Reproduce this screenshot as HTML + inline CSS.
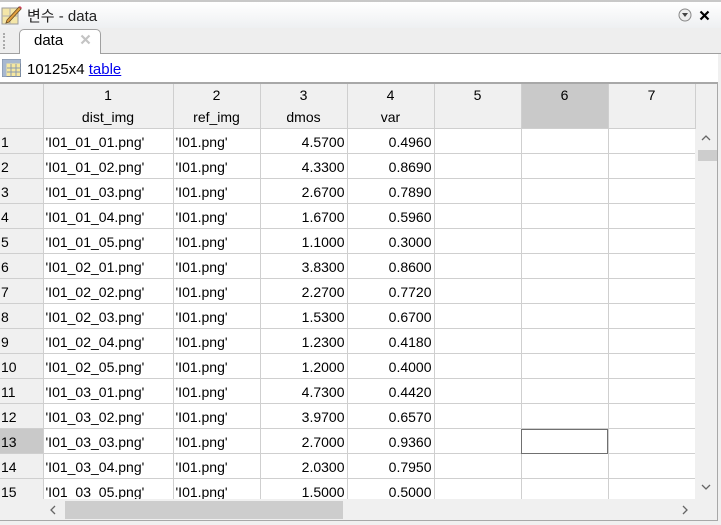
<!DOCTYPE html>
<html><head><meta charset="utf-8"><style>
*{margin:0;padding:0;box-sizing:border-box}
body{width:721px;height:525px;overflow:hidden;background:#f0f0f0;font-family:"Liberation Sans","Noto Sans CJK KR",sans-serif;font-size:14px;color:#000;position:relative}
.abs{position:absolute}
#title{left:0;top:0;width:721px;height:28px;background:linear-gradient(#fff,#eef0f2);border-top:2px solid #c8c8c8}
#tabs{left:0;top:28px;width:721px;height:26px;background:#eeeeee;border-bottom:1px solid #a0a0a0}
#tab{left:19px;top:29px;width:82px;height:25px;background:#fff;border:1px solid #a0a0a0;border-bottom:none;border-radius:5px 5px 0 0}
#info{left:0;top:54px;width:718px;height:30px;background:#fff;border-bottom:2px solid #a8a8a8}
table{position:absolute;left:0;top:84px;border-collapse:collapse;table-layout:fixed;background:#fff}
td{border-right:1px solid #cfcfcf;border-bottom:1px solid #cfcfcf;height:25px;padding:0 2px;white-space:nowrap;overflow:hidden;line-height:24px}
td span{position:relative;top:1px}
tr.h td{height:44px;background:#f0f0f0;text-align:center;line-height:22px;padding-top:0}
td.rh{background:#f0f0f0;padding-left:1px}
td.n{text-align:right}
</style></head><body>
<div id="title" class="abs"></div>
<svg class="abs" style="left:1px;top:5px" width="22" height="20" viewBox="0 0 22 20"><rect x="1" y="3" width="16" height="16" fill="#f4e6a8" stroke="#9a9a9a"/><line x1="1" y1="11" x2="17" y2="11" stroke="#b0b0b0"/><line x1="9" y1="3" x2="9" y2="19" stroke="#b0b0b0"/><path d="M6 15 L18 2 L20 4 L8 17 L5 18 Z" fill="#e0a040" stroke="#6a4a20" stroke-width="0.8"/><path d="M18 2 L20 4 L21 3 L19 1Z" fill="#d04060"/></svg>
<div class="abs" style="left:27px;top:5px;font-size:15px;color:#222">변수 - data</div>
<svg class="abs" style="left:678px;top:8px" width="14" height="14"><circle cx="7" cy="7" r="6" fill="#eee" stroke="#888"/><path d="M4 5 L10 5 L7 9Z" fill="#444"/></svg>
<svg class="abs" style="left:699px;top:10px" width="11" height="11"><path d="M1.5 1.5L9.5 9.5M9.5 1.5L1.5 9.5" stroke="#000" stroke-width="2.2"/></svg>
<div id="tabs" class="abs"></div>
<div class="abs" style="left:3px;top:33px;width:2px;height:16px;border-left:2px dotted #aaa"></div>
<div id="tab" class="abs"></div>
<div class="abs" style="left:34px;top:32px;font-size:15px">data</div>
<svg class="abs" style="left:80px;top:34px" width="11" height="11"><path d="M1.5 1.5L9.5 9.5M9.5 1.5L1.5 9.5" stroke="#c4c4c4" stroke-width="2.2"/></svg>
<div id="info" class="abs"></div>
<svg class="abs" style="left:2px;top:59px" width="19" height="18"><rect x="0.5" y="0.5" width="18" height="17" fill="#f6e8a0" stroke="#7a8aa0"/><rect x="0.5" y="0.5" width="18" height="4" fill="#a8b8d0"/><rect x="0.5" y="0.5" width="4" height="17" fill="#a8b8d0"/><path d="M5 9H19M5 13H19M9 5V18M14 5V18" stroke="#8a9ab0"/></svg>
<div class="abs" style="left:27px;top:61px;font-size:15px">10125x4 <span style="color:#0000ee;text-decoration:underline">table</span></div>
<table>
<colgroup><col style="width:43px"><col style="width:130px"><col style="width:87px"><col style="width:87px"><col style="width:87px"><col style="width:87px"><col style="width:87px"><col style="width:87px"></colgroup>
<tr class="h"><td></td><td>1<br>dist_img</td><td>2<br>ref_img</td><td>3<br>dmos</td><td>4<br>var</td><td style="vertical-align:top">5</td><td style="vertical-align:top;background:#c9c9c9">6</td><td style="vertical-align:top">7</td></tr>
<tr><td class="rh"><span>1</span></td><td><span>'I01_01_01.png'</span></td><td><span>'I01.png'</span></td><td class="n"><span>4.5700</span></td><td class="n"><span>0.4960</span></td><td></td><td></td><td></td></tr>
<tr><td class="rh"><span>2</span></td><td><span>'I01_01_02.png'</span></td><td><span>'I01.png'</span></td><td class="n"><span>4.3300</span></td><td class="n"><span>0.8690</span></td><td></td><td></td><td></td></tr>
<tr><td class="rh"><span>3</span></td><td><span>'I01_01_03.png'</span></td><td><span>'I01.png'</span></td><td class="n"><span>2.6700</span></td><td class="n"><span>0.7890</span></td><td></td><td></td><td></td></tr>
<tr><td class="rh"><span>4</span></td><td><span>'I01_01_04.png'</span></td><td><span>'I01.png'</span></td><td class="n"><span>1.6700</span></td><td class="n"><span>0.5960</span></td><td></td><td></td><td></td></tr>
<tr><td class="rh"><span>5</span></td><td><span>'I01_01_05.png'</span></td><td><span>'I01.png'</span></td><td class="n"><span>1.1000</span></td><td class="n"><span>0.3000</span></td><td></td><td></td><td></td></tr>
<tr><td class="rh"><span>6</span></td><td><span>'I01_02_01.png'</span></td><td><span>'I01.png'</span></td><td class="n"><span>3.8300</span></td><td class="n"><span>0.8600</span></td><td></td><td></td><td></td></tr>
<tr><td class="rh"><span>7</span></td><td><span>'I01_02_02.png'</span></td><td><span>'I01.png'</span></td><td class="n"><span>2.2700</span></td><td class="n"><span>0.7720</span></td><td></td><td></td><td></td></tr>
<tr><td class="rh"><span>8</span></td><td><span>'I01_02_03.png'</span></td><td><span>'I01.png'</span></td><td class="n"><span>1.5300</span></td><td class="n"><span>0.6700</span></td><td></td><td></td><td></td></tr>
<tr><td class="rh"><span>9</span></td><td><span>'I01_02_04.png'</span></td><td><span>'I01.png'</span></td><td class="n"><span>1.2300</span></td><td class="n"><span>0.4180</span></td><td></td><td></td><td></td></tr>
<tr><td class="rh"><span>10</span></td><td><span>'I01_02_05.png'</span></td><td><span>'I01.png'</span></td><td class="n"><span>1.2000</span></td><td class="n"><span>0.4000</span></td><td></td><td></td><td></td></tr>
<tr><td class="rh"><span>11</span></td><td><span>'I01_03_01.png'</span></td><td><span>'I01.png'</span></td><td class="n"><span>4.7300</span></td><td class="n"><span>0.4420</span></td><td></td><td></td><td></td></tr>
<tr><td class="rh"><span>12</span></td><td><span>'I01_03_02.png'</span></td><td><span>'I01.png'</span></td><td class="n"><span>3.9700</span></td><td class="n"><span>0.6570</span></td><td></td><td></td><td></td></tr>
<tr><td class="rh" style="background:#c9c9c9"><span>13</span></td><td><span>'I01_03_03.png'</span></td><td><span>'I01.png'</span></td><td class="n"><span>2.7000</span></td><td class="n"><span>0.9360</span></td><td></td><td style="outline:1px solid #707070;outline-offset:-1px"></td><td></td></tr>
<tr><td class="rh"><span>14</span></td><td><span>'I01_03_04.png'</span></td><td><span>'I01.png'</span></td><td class="n"><span>2.0300</span></td><td class="n"><span>0.7950</span></td><td></td><td></td><td></td></tr>
<tr><td class="rh"><span>15</span></td><td><span>'I01_03_05.png'</span></td><td><span>'I01.png'</span></td><td class="n"><span>1.5000</span></td><td class="n"><span>0.5000</span></td><td></td><td></td><td></td></tr>
</table>
<div class="abs" style="left:0;top:499px;width:718px;height:22px;background:#f0f0f0;border-bottom:1px solid #a8a8a8"></div>
<div class="abs" style="left:65px;top:501px;width:278px;height:18px;background:#cdcdcd"></div>
<svg class="abs" style="left:48px;top:504px" width="10" height="12"><path d="M7 2 L3 6 L7 10" fill="none" stroke="#666" stroke-width="1.3"/></svg>
<svg class="abs" style="left:680px;top:504px" width="10" height="12"><path d="M3 2 L7 6 L3 10" fill="none" stroke="#666" stroke-width="1.3"/></svg>
<div class="abs" style="left:695px;top:129px;width:23px;height:370px;background:#f0f0f0"></div>
<div class="abs" style="left:698px;top:150px;width:19px;height:11px;background:#cdcdcd"></div>
<svg class="abs" style="left:700px;top:133px" width="12" height="10"><path d="M2 7 L6 3 L10 7" fill="none" stroke="#666" stroke-width="1.3"/></svg>
<svg class="abs" style="left:700px;top:482px" width="12" height="10"><path d="M2 3 L6 7 L10 3" fill="none" stroke="#666" stroke-width="1.3"/></svg>
<div class="abs" style="left:717px;top:84px;width:1px;height:437px;background:#a8a8a8"></div>
</body></html>
